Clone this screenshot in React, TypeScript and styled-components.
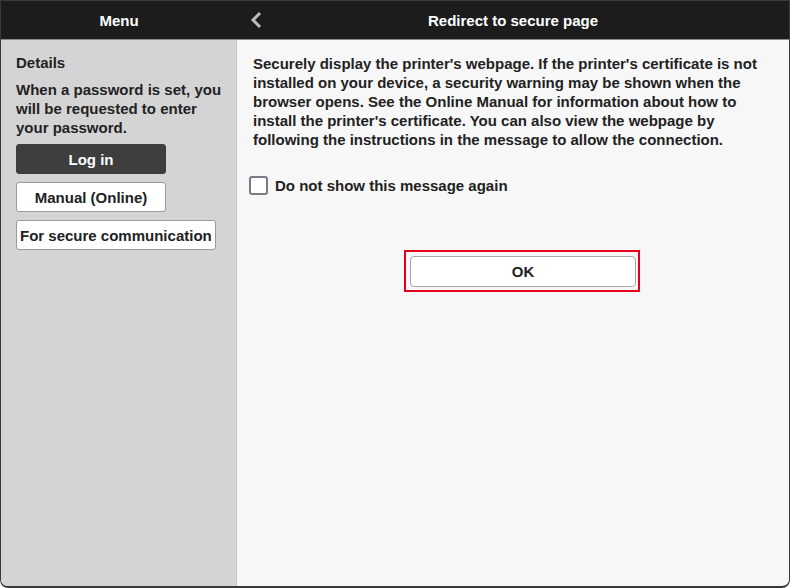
import React, { useState } from 'react';
import styled, { createGlobalStyle } from 'styled-components';

const GlobalStyle = createGlobalStyle`
    html, body {
        margin: 0;
        padding: 0;
        background: #ffffff;
    }
    body {
        font-family: "Liberation Sans", Arial, Helvetica, sans-serif;
    }
`;

const Frame = styled.div`
    width: 790px;
    height: 588px;
    box-sizing: border-box;
    border: 1px solid #3a3a3a;
    border-bottom-width: 2px;
    border-radius: 0 0 8px 8px;
    overflow: hidden;
    display: flex;
    flex-direction: column;
    background: #f7f7f7;
`;

const Header = styled.div`
    height: 38px;
    flex: none;
    display: flex;
    background: #1c1c1c;
    border-bottom: 1px solid #8a8a8a;
    color: #ffffff;
    font-weight: bold;
    font-size: 15px;
`;

const HeaderSide = styled.div`
    width: 236px;
    flex: none;
    display: flex;
    align-items: center;
    justify-content: center;
`;

const HeaderMain = styled.div`
    flex: 1;
    position: relative;
    display: flex;
    align-items: center;
    justify-content: center;
`;

const BackButton = styled.button`
    position: absolute;
    left: 12px;
    top: 50%;
    transform: translateY(-50%);
    background: none;
    border: none;
    padding: 0;
    display: flex;
    cursor: pointer;
`;

const Body = styled.div`
    flex: 1;
    display: flex;
    min-height: 0;
`;

const Sidebar = styled.div`
    width: 236px;
    flex: none;
    box-sizing: border-box;
    background: #d4d4d4;
    border-right: 1px solid #c6c6c6;
    padding: 13px 8px 0 15px;
    color: #222222;
    font-weight: bold;
    font-size: 15px;
    line-height: 19px;
`;

const SideTitle = styled.div`
    margin-bottom: 8px;
`;

const SideText = styled.div`
    margin-bottom: 7px;
`;

const SideButton = styled.button<{ $dark?: boolean }>`
    display: block;
    box-sizing: border-box;
    min-width: 150px;
    height: 30px;
    margin-bottom: 8px;
    padding: 0 3px;
    border-radius: 3px;
    border: 1px solid ${p => (p.$dark ? '#3c3c3c' : '#9a9a9a')};
    background: ${p => (p.$dark ? '#3e3e3e' : '#ffffff')};
    color: ${p => (p.$dark ? '#ffffff' : '#222222')};
    font-family: inherit;
    font-weight: bold;
    font-size: 15px;
    cursor: pointer;

    & + & {
        margin-top: 1px;
    }
`;

const Content = styled.div`
    flex: 1;
    padding: 14px 24px 0 16px;
    color: #222222;
    font-weight: bold;
    font-size: 15px;
    line-height: 19px;
`;

const Message = styled.p`
    margin: 0 0 27px 0;
`;

const CheckRow = styled.label`
    display: flex;
    align-items: center;
    gap: 7px;
    margin-left: -4px;
    cursor: pointer;
`;

const CheckBox = styled.span<{ $checked: boolean }>`
    width: 19px;
    height: 19px;
    box-sizing: border-box;
    border: 2px solid #7a7a86;
    border-radius: 3px;
    background: #ffffff;
    display: flex;
    align-items: center;
    justify-content: center;
    color: #333;
    font-size: 13px;
`;

const OkRow = styled.div`
    display: flex;
    justify-content: center;
    margin-top: 55px;
    padding-left: 26px;
`;

const OkHighlight = styled.div`
    border: 2px solid #e4001c;
    padding: 4px 2px 3px 4px;
`;

const OkButton = styled.button`
    display: block;
    width: 226px;
    height: 31px;
    box-sizing: border-box;
    border: 1px solid #a8a8a8;
    border-radius: 4px;
    background: #ffffff;
    color: #222222;
    font-family: inherit;
    font-weight: bold;
    font-size: 15px;
    cursor: pointer;
`;

const App: React.FC = () => {
    const [hide, setHide] = useState(false);

    return (
        <>
            <GlobalStyle />
            <Frame>
                <Header>
                    <HeaderSide>Menu</HeaderSide>
                    <HeaderMain>
                        <BackButton aria-label="Back">
                            <svg width="14" height="18" viewBox="0 0 14 18">
                                <path d="M11 2 L4 9 L11 16" fill="none" stroke="#bdbdbd" strokeWidth="3" />
                            </svg>
                        </BackButton>
                        Redirect to secure page
                    </HeaderMain>
                </Header>
                <Body>
                    <Sidebar>
                        <SideTitle>Details</SideTitle>
                        <SideText>When a password is set, you will be requested to enter your password.</SideText>
                        <SideButton $dark>Log in</SideButton>
                        <SideButton>Manual (Online)</SideButton>
                        <SideButton>For secure communication</SideButton>
                    </Sidebar>
                    <Content>
                        <Message>
                            Securely display the printer's webpage. If the printer's certificate is not
                            installed on your device, a security warning may be shown when the
                            browser opens. See the Online Manual for information about how to
                            install the printer's certificate. You can also view the webpage by
                            following the instructions in the message to allow the connection.
                        </Message>
                        <CheckRow onClick={() => setHide(!hide)}>
                            <CheckBox $checked={hide}>{hide ? '✓' : ''}</CheckBox>
                            Do not show this message again
                        </CheckRow>
                        <OkRow>
                            <OkHighlight>
                                <OkButton>OK</OkButton>
                            </OkHighlight>
                        </OkRow>
                    </Content>
                </Body>
            </Frame>
        </>
    );
};

export default App;
